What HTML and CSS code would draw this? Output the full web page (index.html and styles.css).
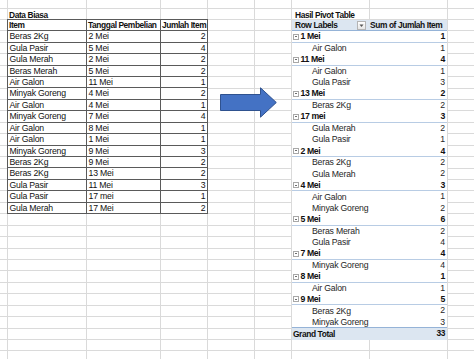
FILE: index.html
```html
<!DOCTYPE html>
<html lang="id">
<head>
<meta charset="utf-8">
<title>Data Biasa dan Pivot Table</title>
<link rel="stylesheet" href="styles.css">
</head>
<body>
<div class="sheet">
  <section class="plain">
    <div class="title">Data Biasa</div>
    <div class="tbl">
      <div class="c h">Item</div><div class="c h">Tanggal Pembelian</div><div class="c h">Jumlah Item</div>
      <div class="c">Beras 2Kg</div><div class="c">2 Mei</div><div class="c n">2</div>
      <div class="c">Gula Pasir</div><div class="c">5 Mei</div><div class="c n">4</div>
      <div class="c">Gula Merah</div><div class="c">2 Mei</div><div class="c n">2</div>
      <div class="c">Beras Merah</div><div class="c">5 Mei</div><div class="c n">2</div>
      <div class="c">Air Galon</div><div class="c">11 Mei</div><div class="c n">1</div>
      <div class="c">Minyak Goreng</div><div class="c">4 Mei</div><div class="c n">2</div>
      <div class="c">Air Galon</div><div class="c">4 Mei</div><div class="c n">1</div>
      <div class="c">Minyak Goreng</div><div class="c">7 Mei</div><div class="c n">4</div>
      <div class="c">Air Galon</div><div class="c">8 Mei</div><div class="c n">1</div>
      <div class="c">Air Galon</div><div class="c">1 Mei</div><div class="c n">1</div>
      <div class="c">Minyak Goreng</div><div class="c">9 Mei</div><div class="c n">3</div>
      <div class="c">Beras 2Kg</div><div class="c">9 Mei</div><div class="c n">2</div>
      <div class="c">Beras 2Kg</div><div class="c">13 Mei</div><div class="c n">2</div>
      <div class="c">Gula Pasir</div><div class="c">11 Mei</div><div class="c n">3</div>
      <div class="c">Gula Pasir</div><div class="c">17 mei</div><div class="c n">1</div>
      <div class="c">Gula Merah</div><div class="c">17 Mei</div><div class="c n">2</div>
    </div>
  </section>

  <section class="pivot">
    <div class="title">Hasil Pivot Table</div>
    <div class="ptbl">
      <div class="prow head"><div class="pl"><span>Row Labels</span><span class="dd"><svg viewBox="0 0 7 7" width="7" height="7"><path d="M1.5 2.5h4l-2 2.5z" fill="#555"/></svg></span></div><div class="pv hl">Sum of Jumlah Item</div></div>

      <div class="prow grp"><div class="pl"><i class="mx"></i>1 Mei</div><div class="pv">1</div></div>
      <div class="prow item"><div class="pl">Air Galon</div><div class="pv">1</div></div>

      <div class="prow grp"><div class="pl"><i class="mx"></i>11 Mei</div><div class="pv">4</div></div>
      <div class="prow item"><div class="pl">Air Galon</div><div class="pv">1</div></div>
      <div class="prow item"><div class="pl">Gula Pasir</div><div class="pv">3</div></div>

      <div class="prow grp"><div class="pl"><i class="mx"></i>13 Mei</div><div class="pv">2</div></div>
      <div class="prow item"><div class="pl">Beras 2Kg</div><div class="pv">2</div></div>

      <div class="prow grp"><div class="pl"><i class="mx"></i>17 mei</div><div class="pv">3</div></div>
      <div class="prow item"><div class="pl">Gula Merah</div><div class="pv">2</div></div>
      <div class="prow item"><div class="pl">Gula Pasir</div><div class="pv">1</div></div>

      <div class="prow grp"><div class="pl"><i class="mx"></i>2 Mei</div><div class="pv">4</div></div>
      <div class="prow item"><div class="pl">Beras 2Kg</div><div class="pv">2</div></div>
      <div class="prow item"><div class="pl">Gula Merah</div><div class="pv">2</div></div>

      <div class="prow grp"><div class="pl"><i class="mx"></i>4 Mei</div><div class="pv">3</div></div>
      <div class="prow item"><div class="pl">Air Galon</div><div class="pv">1</div></div>
      <div class="prow item"><div class="pl">Minyak Goreng</div><div class="pv">2</div></div>

      <div class="prow grp"><div class="pl"><i class="mx"></i>5 Mei</div><div class="pv">6</div></div>
      <div class="prow item"><div class="pl">Beras Merah</div><div class="pv">2</div></div>
      <div class="prow item"><div class="pl">Gula Pasir</div><div class="pv">4</div></div>

      <div class="prow grp"><div class="pl"><i class="mx"></i>7 Mei</div><div class="pv">4</div></div>
      <div class="prow item"><div class="pl">Minyak Goreng</div><div class="pv">4</div></div>

      <div class="prow grp"><div class="pl"><i class="mx"></i>8 Mei</div><div class="pv">1</div></div>
      <div class="prow item"><div class="pl">Air Galon</div><div class="pv">1</div></div>

      <div class="prow grp"><div class="pl"><i class="mx"></i>9 Mei</div><div class="pv">5</div></div>
      <div class="prow item"><div class="pl">Beras 2Kg</div><div class="pv">2</div></div>
      <div class="prow item"><div class="pl">Minyak Goreng</div><div class="pv">3</div></div>

      <div class="prow total"><div class="pl">Grand Total</div><div class="pv">33</div></div>
    </div>
  </section>

  <svg class="arrow" viewBox="0 0 57 31" width="57" height="31">
    <path d="M0.5 7.5H40.5V0.8L56.3 15.5L40.5 30.2V23.5H0.5Z" fill="#4472c4" stroke="#2f528f" stroke-width="1"/>
  </svg>
</div>
</body>
</html>
```

FILE: styles.css
```css
* { box-sizing: border-box; }

html, body {
  margin: 0;
  padding: 0;
  background: #fff;
}

body {
  font-family: "Liberation Sans", Arial, sans-serif;
  font-size: 8.7px;
  letter-spacing: -0.2px;
  color: #111;
  overflow: hidden;
}

.sheet {
  --rh: 11.43px;
  --grid: #dadada;
  position: relative;
  width: 474px;
  height: 359px;
  display: flex;
  align-items: flex-start;
  gap: 84px;
  padding: 8.5px 0 0 7px;
  background-color: #fff;
  background-image:
    linear-gradient(var(--grid), var(--grid)),
    linear-gradient(var(--grid), var(--grid)),
    linear-gradient(var(--grid), var(--grid)),
    linear-gradient(var(--grid), var(--grid)),
    linear-gradient(var(--grid), var(--grid)),
    linear-gradient(var(--grid), var(--grid)),
    linear-gradient(var(--grid), var(--grid)),
    linear-gradient(var(--grid), var(--grid)),
    repeating-linear-gradient(to bottom, transparent 0 10.43px, var(--grid) 10.43px 11.43px);
  background-repeat: no-repeat;
  background-size:
    1px 100%, 1px 100%, 1px 100%, 1px 100%, 1px 100%, 1px 100%, 1px 100%, 1px 100%,
    100% 420px;
  background-position:
    7px 0, 86px 0, 160px 0, 207px 0, 254px 0, 291px 0, 369px 0, 447px 0,
    0 -2.93px;
}

.title {
  height: var(--rh);
  padding: 0 3px;
  font-weight: bold;
  font-size: 8.4px;
  letter-spacing: -0.4px;
  line-height: 12px;
  white-space: nowrap;
}

/* ---------- plain data table ---------- */
.plain .title { padding-left: 2px; }

.tbl {
  display: grid;
  grid-template-columns: 79px 74px 47px;
  grid-auto-rows: var(--rh);
  width: 201px;
  margin-top: -1px;
  border-top: 1px solid #5a5a5a;
  border-left: 1px solid #5a5a5a;
  background: #fff;
}

.c {
  border-right: 1px solid #5a5a5a;
  border-bottom: 1px solid #5a5a5a;
  padding: 0 1.5px;
  line-height: 10.8px;
  white-space: nowrap;
  overflow: hidden;
}

.c.h {
  font-weight: bold;
  font-size: 8.4px;
  letter-spacing: -0.42px;
  padding-left: 1px;
}

.c.n { text-align: right; }

/* ---------- pivot table ---------- */
.pivot { width: 155px; }

.ptbl { background: #fff; }

.prow {
  display: grid;
  grid-template-columns: 77px 78px;
  height: var(--rh);
  line-height: 10.8px;
  white-space: nowrap;
}

.pl {
  display: flex;
  align-items: center;
  padding-left: 3px;
  overflow: hidden;
}

.pv {
  text-align: right;
  padding-right: 2px;
  line-height: 10.8px;
}

.prow.head {
  background: #dce6f1;
  border-bottom: 1px solid #95b3d7;
  font-weight: bold;
  font-size: 8.4px;
  letter-spacing: -0.4px;
}

.prow.head .pl {
  justify-content: space-between;
  padding-right: 3px;
}

.prow.head .pv { text-align: left; padding-left: 1px; }

.dd {
  display: flex;
  align-items: center;
  justify-content: center;
  width: 9px;
  height: 9px;
  border: 1px solid #b4b4b4;
  background: linear-gradient(#ffffff, #e6e6e6);
}

.prow.grp {
  font-weight: bold;
  letter-spacing: -0.4px;
  border-bottom: 1px solid #b8cce4;
}

.prow.grp .pl { padding-left: 1px; }

.mx {
  position: relative;
  display: inline-block;
  width: 6px;
  height: 6px;
  margin-right: 1.5px;
  border: 1px solid #a8a8a8;
  background: #fff;
  flex: none;
}

.mx::after {
  content: "";
  position: absolute;
  left: 1px;
  top: 1.5px;
  width: 2px;
  height: 1px;
  background: #6d6d6d;
}

.prow.item .pl {
  padding-left: 20px;
  color: #262626;
}

.prow.item .pv { color: #262626; }

.prow.total {
  background: #dce6f1;
  border-top: 1px solid #95b3d7;
  margin-top: -1px;
  height: calc(var(--rh) + 1px);
  font-weight: bold;
  font-size: 8.4px;
  letter-spacing: -0.4px;
}

.prow.total .pl { padding-left: 1px; }

/* ---------- arrow shape over the sheet ---------- */
.arrow {
  position: absolute;
  left: 220px;
  top: 87px;
  display: block;
}
```
